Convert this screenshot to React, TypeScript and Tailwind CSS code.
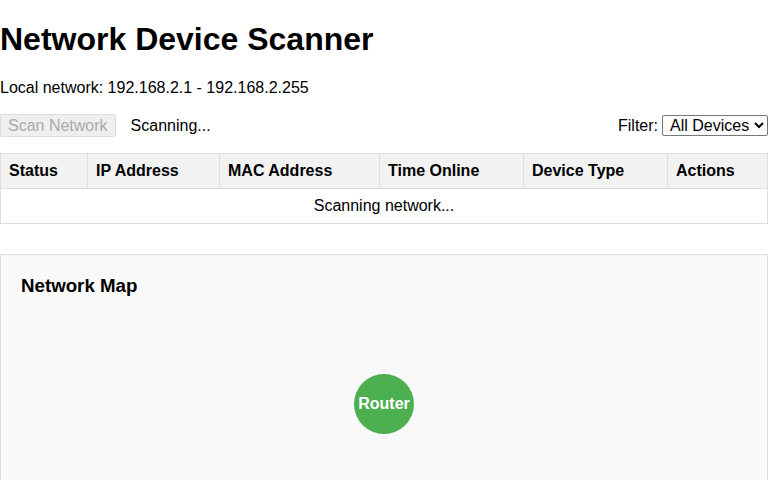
const columns = [
  { label: "Status", w: "w-[87px]" },
  { label: "IP Address", w: "w-[132px]" },
  { label: "MAC Address", w: "w-[160px]" },
  { label: "Time Online", w: "w-[144px]" },
  { label: "Device Type", w: "w-[144px]" },
  { label: "Actions", w: "" },
];

export default function App() {
  return (
    <div className="font-['Liberation_Sans',Arial,sans-serif] text-black bg-white min-h-[480px] text-[16px]">
      {/* Title */}
      <h1 className="text-[32px] font-bold leading-[37px] pt-[21px] mb-[21px]">Network Device Scanner</h1>

      <p className="leading-[18px] mb-[17px]">Local network: 192.168.2.1 - 192.168.2.255</p>

      {/* Controls */}
      <div className="flex items-center justify-between h-[23px] mb-4">
        <div className="flex items-center">
          <button
            disabled
            className="h-[23px] px-[7px] leading-[18px] bg-[#efefef] border border-[#dcdcdc] rounded-[2px] text-[#a9a9a9]"
          >
            Scan Network
          </button>
          <span className="ml-[15px] leading-[18px]">Scanning...</span>
        </div>
        <div className="flex items-center">
          <span className="mr-[4px] leading-[18px]">Filter:</span>
          <select className="h-[21px] w-[106px] border border-[#767676] rounded-[2px] pl-[3px] leading-[18px] bg-white">
            <option>All Devices</option>
          </select>
        </div>
      </div>

      {/* Device table */}
      <table className="w-full border-collapse">
        <thead>
          <tr>
            {columns.map((c) => (
              <th
                key={c.label}
                className={`${c.w} border border-[#dddddd] bg-[#f2f2f2] px-2 py-2 text-left font-bold leading-[18px]`}
              >
                {c.label}
              </th>
            ))}
          </tr>
        </thead>
        <tbody>
          <tr>
            <td colSpan={6} className="border border-[#dddddd] px-2 py-2 text-center leading-[18px]">
              Scanning network...
            </td>
          </tr>
        </tbody>
      </table>

      {/* Network map */}
      <div className="mt-[30px] border border-[#dddddd] bg-[#f9f9f9] p-5">
        <h3 className="text-[18.72px] font-bold leading-[22px] mb-[19px]">Network Map</h3>
        <div className="relative h-[300px]">
          <div className="absolute left-1/2 top-[58px] -translate-x-1/2 w-[60px] h-[60px] rounded-full bg-[#4caf50] flex items-center justify-center text-white font-bold">
            Router
          </div>
        </div>
      </div>
    </div>
  );
}
